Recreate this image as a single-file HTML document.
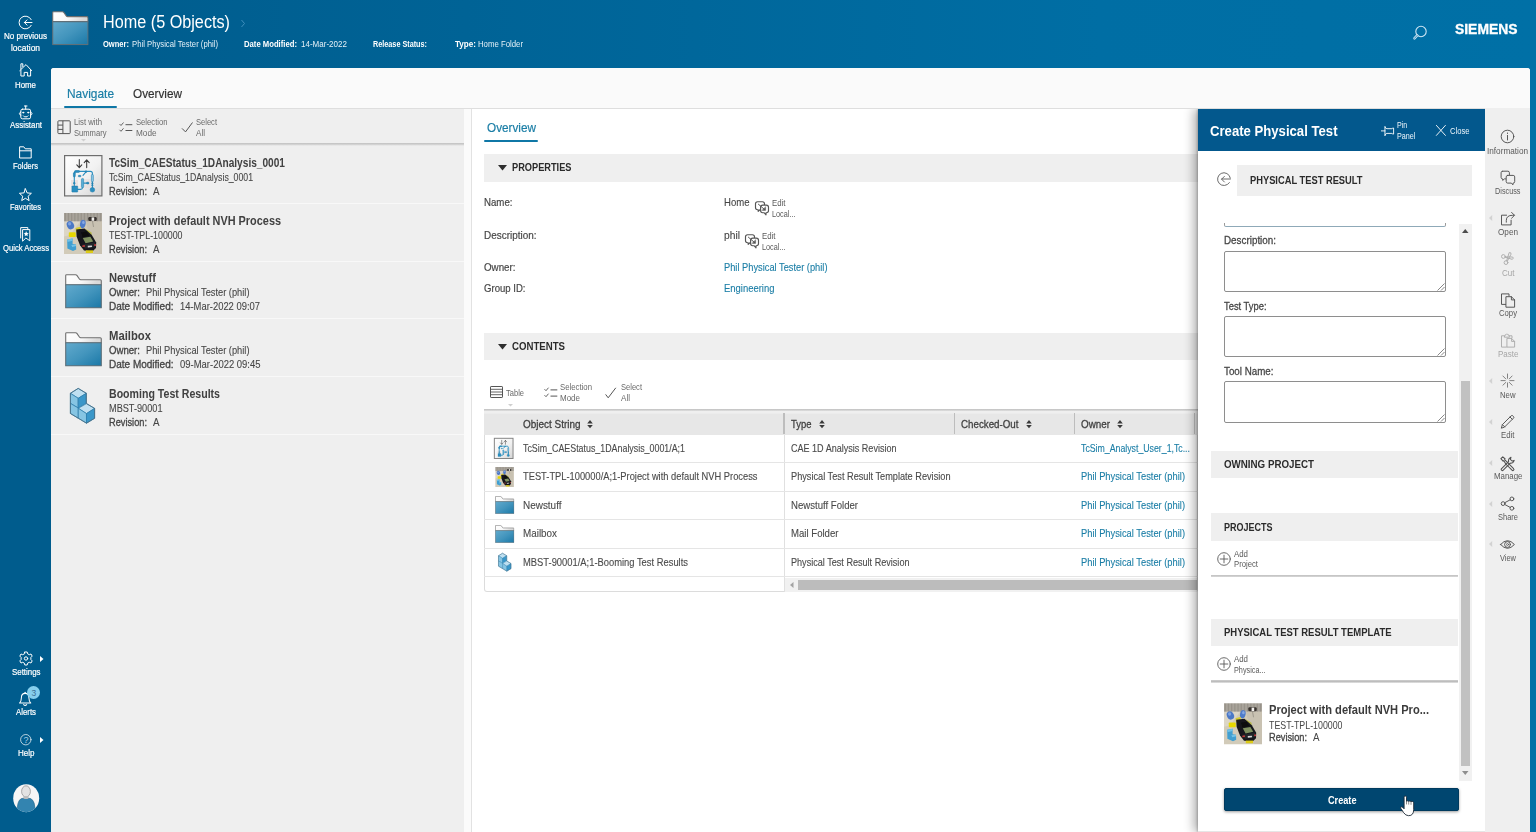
<!DOCTYPE html>
<html lang="en"><head><meta charset="utf-8"><title>Home - Active Workspace</title>
<style>
html,body{margin:0;padding:0;}
body{width:1536px;height:832px;overflow:hidden;background:#005c8d;font-family:"Liberation Sans",sans-serif;}
#app{position:relative;width:1536px;height:832px;overflow:hidden;background:linear-gradient(to right,#005c8d 0px,#005c8d 60px,#006ea4 1100px,#0070a6 1536px);}
.b{position:absolute;box-sizing:border-box;display:block;}
.t{position:absolute;white-space:nowrap;line-height:1;display:block;transform-origin:0 50%;}
svg{overflow:visible;}
.ico{fill:none;stroke:#4d4d4d;stroke-width:1;stroke-linecap:round;stroke-linejoin:round;}
.pb{display:inline-block;width:0;height:0;}

</style></head>
<body>
<svg width="0" height="0" style="position:absolute">
<defs>
<linearGradient id="gFold" x1="0" y1="0" x2="1" y2="1"><stop offset="0" stop-color="#62aacd"/><stop offset="0.5" stop-color="#4395bd"/><stop offset="1" stop-color="#1a78a7"/></linearGradient>
<linearGradient id="gTab" x1="0" y1="0" x2="1" y2="0.35"><stop offset="0" stop-color="#ffffff"/><stop offset="0.6" stop-color="#f8f8f8"/><stop offset="1" stop-color="#d9d9d9"/></linearGradient>
<linearGradient id="gCae" x1="0" y1="0" x2="1" y2="1"><stop offset="0" stop-color="#ffffff"/><stop offset="0.55" stop-color="#f1f1f1"/><stop offset="1" stop-color="#d4d4d4"/></linearGradient>
<symbol id="folder" viewBox="0 0 37 34.6">
<path d="M0.7 11 V1.6 Q0.7 0.7 1.6 0.7 H10.6 Q11.4 0.7 11.9 1.4 L14.4 5 Q14.9 5.7 15.8 5.7 H35.2 Q36.3 5.7 36.3 6.8 V11 Z" fill="url(#gTab)" stroke="#6f6f6f" stroke-width="1.1" stroke-linejoin="round"/>
<rect x="0.7" y="10.7" width="35.6" height="23.2" fill="url(#gFold)" stroke="#5f6f78" stroke-width="1.1" stroke-linejoin="round"/>
</symbol>
</defs>
</svg>

<div id="app">
<div class="b" style="left:0px;top:0px;width:51px;height:832px;background:#005c8d;"></div>
<div class="b" style="left:51px;top:67.5px;width:1479px;height:765px;background:#fff;border-radius:3px 3px 0 0;"></div>
<div class="b" style="left:51px;top:67.5px;width:1479px;height:40.5px;background:#fafafa;border-radius:3px 3px 0 0;"></div>
<div class="b" style="left:51px;top:108px;width:1479px;height:1px;background:#dedede;"></div>
<div class="b" style="left:51px;top:109px;width:413px;height:723px;background:#efefef;"></div>
<div class="b" style="left:464px;top:109px;width:7px;height:723px;background:#fbfbfb;"></div>
<div class="b" style="left:470.5px;top:109px;width:1px;height:723px;background:#e2e2e2;"></div>
<svg class="b" style="left:52.1px;top:10.5px;" width="36.7" height="34.3" viewBox="0 0 36.7 34.3"><use href="#folder" width="36.7" height="34.3"/></svg>
<span class="t" style="left:103.00px;top:13.01px;font-size:18px;color:#fff;transform:scaleX(0.9004);">Home (5 Objects)</span>
<svg class="b" style="left:240px;top:19px;" width="6" height="9" viewBox="0 0 6 9"><path d="M1.5 1 L4.5 4.5 L1.5 8" fill="none" stroke="#3f8fbd" stroke-width="1"/></svg>
<span class="t" style="left:103.00px;top:40.31px;font-size:9px;color:#fff;font-weight:700;transform:scaleX(0.8383);">Owner:</span>
<span class="t" style="left:132.00px;top:40.31px;font-size:9px;color:#e4f0f7;transform:scaleX(0.8568);">Phil Physical Tester (phil)</span>
<span class="t" style="left:244.00px;top:40.31px;font-size:9px;color:#fff;font-weight:700;transform:scaleX(0.8548);">Date Modified:</span>
<span class="t" style="left:301.00px;top:40.31px;font-size:9px;color:#e4f0f7;transform:scaleX(0.8927);">14-Mar-2022</span>
<span class="t" style="left:373.00px;top:40.31px;font-size:9px;color:#fff;font-weight:700;transform:scaleX(0.8056);">Release Status:</span>
<span class="t" style="left:455.00px;top:40.31px;font-size:9px;color:#fff;font-weight:700;transform:scaleX(0.8996);">Type:</span>
<span class="t" style="left:478.00px;top:40.31px;font-size:9px;color:#e4f0f7;transform:scaleX(0.8649);">Home Folder</span>
<svg class="b" style="left:1410px;top:22px;" width="20" height="20" viewBox="0 0 20 20"><circle cx="11" cy="9.5" r="5.2" fill="none" stroke="#cfe6f4" stroke-width="1.1"/><path d="M7.2 13.4 L4.4 16.4" stroke="#cfe6f4" stroke-width="2.4" stroke-linecap="round"/><path d="M7.2 13.4 L4.4 16.4" stroke="#0a70a6" stroke-width="0.8" stroke-linecap="round"/></svg>
<span class="t" style="left:1454.50px;top:22.01px;font-size:14px;color:#fff;font-weight:700;-webkit-text-stroke:0.3px #fff;transform:scaleX(0.9918);">SIEMENS</span>
<span class="t" style="left:4.00px;top:32.42px;font-size:9px;color:#fff;-webkit-text-stroke:0.2px #fff;transform:scaleX(0.8953);">No previous</span>
<span class="t" style="left:11.00px;top:43.61px;font-size:9px;color:#fff;-webkit-text-stroke:0.2px #fff;transform:scaleX(0.9345);">location</span>
<span class="t" style="left:15.30px;top:80.70px;font-size:9px;color:#fff;-webkit-text-stroke:0.2px #fff;transform:scaleX(0.8744);">Home</span>
<span class="t" style="left:10.00px;top:121.20px;font-size:9px;color:#fff;-webkit-text-stroke:0.2px #fff;transform:scaleX(0.8763);">Assistant</span>
<span class="t" style="left:13.00px;top:162.01px;font-size:9px;color:#fff;-webkit-text-stroke:0.2px #fff;transform:scaleX(0.8329);">Folders</span>
<span class="t" style="left:10.00px;top:203.01px;font-size:9px;color:#fff;-webkit-text-stroke:0.2px #fff;transform:scaleX(0.8375);">Favorites</span>
<span class="t" style="left:3.00px;top:244.01px;font-size:9px;color:#fff;-webkit-text-stroke:0.2px #fff;transform:scaleX(0.8514);">Quick Access</span>
<span class="t" style="left:11.75px;top:667.81px;font-size:9px;color:#fff;-webkit-text-stroke:0.2px #fff;transform:scaleX(0.8761);">Settings</span>
<span class="t" style="left:15.70px;top:708.31px;font-size:9px;color:#fff;-webkit-text-stroke:0.2px #fff;transform:scaleX(0.8690);">Alerts</span>
<span class="t" style="left:18.05px;top:749.01px;font-size:9px;color:#fff;-webkit-text-stroke:0.2px #fff;transform:scaleX(0.8911);">Help</span>
<svg class="b" style="left:18px;top:15.3px;" width="15" height="15" viewBox="0 0 15 15"><g fill="none" stroke="#fff" stroke-width="1" stroke-linecap="round" stroke-linejoin="round"><path d="M13.2 4.6 A6.4 6.4 0 1 0 13.2 10.4"/><path d="M14 7.5 H6.4 M9 4.9 L6.4 7.5 L9 10.1"/></g></svg>
<svg class="b" style="left:19px;top:63px;" width="14" height="14" viewBox="0 0 14 14"><g fill="none" stroke="#fff" stroke-width="1" stroke-linecap="round" stroke-linejoin="round"><path d="M0.8 7.6 L7 1.6 L12.6 7.6"/><path d="M1.9 6.8 V13 H5.2 V9.4 H8.6 V13 H11.6 V6.8"/><path d="M1.9 5.6 V0.8 H3.8 V3.6"/></g></svg>
<svg class="b" style="left:19px;top:104.5px;" width="14" height="15" viewBox="0 0 14 15"><g fill="none" stroke="#fff" stroke-width="1" stroke-linecap="round" stroke-linejoin="round"><rect x="1.8" y="4.2" width="9.8" height="9.6" rx="1.6"/><path d="M6.7 4.2 V1 M5.4 1 H8"/><path d="M1.8 7 Q0.4 7.6 0.4 8.6 Q0.4 9.8 1.8 10.2 M11.6 7 Q13 7.6 13 8.6 Q13 9.8 11.6 10.2"/><circle cx="4.2" cy="7.6" r="0.55" fill="#fff"/><circle cx="9.2" cy="7.6" r="0.55" fill="#fff"/><path d="M4.4 10.8 L5.4 11.8 H8 L9 10.8"/></g></svg>
<svg class="b" style="left:19px;top:145.8px;" width="13" height="13" viewBox="0 0 13 13"><g fill="none" stroke="#fff" stroke-width="1" stroke-linecap="round" stroke-linejoin="round"><path d="M0.6 11.6 V0.8 H4.8 L6.2 2.8 H12.2 V11.6 Z"/><path d="M0.6 4.8 H12.2"/></g></svg>
<svg class="b" style="left:19.3px;top:187.5px;" width="13" height="14" viewBox="0 0 13 14"><g fill="none" stroke="#fff" stroke-width="1" stroke-linecap="round" stroke-linejoin="round"><path d="M6.4 0.8 L8.1 4.9 L12.4 5.3 L9.1 8.2 L10.1 12.6 L6.4 10.3 L2.7 12.6 L3.7 8.2 L0.4 5.3 L4.7 4.9 Z"/></g></svg>
<svg class="b" style="left:20.3px;top:226.8px;" width="11" height="15" viewBox="0 0 11 15"><g fill="none" stroke="#fff" stroke-width="1" stroke-linecap="round" stroke-linejoin="round"><path d="M2.6 13.8 V2.6 H9.8 V13.8 L6.2 11.2 Z"/><path d="M0.7 11 V0.6 H7.8 V2.4"/><path d="M6.2 4.6 L6.9 6.1 L8.5 6.3 L7.3 7.4 L7.6 9 L6.2 8.2 L4.8 9 L5.1 7.4 L3.9 6.3 L5.5 6.1 Z" fill="#fff" stroke-width="0.2"/></g></svg>
<svg class="b" style="left:18.7px;top:651px;" width="14" height="15" viewBox="0 0 14 15"><g fill="none" stroke="#fff" stroke-width="1" stroke-linecap="round" stroke-linejoin="round"><circle cx="7" cy="7.5" r="1.7"/><path d="M5.8 1 H8.2 L8.6 2.8 L10.3 3.7 L12 3 L13.2 5.1 L11.9 6.4 V8.6 L13.2 9.9 L12 12 L10.3 11.3 L8.6 12.2 L8.2 14 H5.8 L5.4 12.2 L3.7 11.3 L2 12 L0.8 9.9 L2.1 8.6 V6.4 L0.8 5.1 L2 3 L3.7 3.7 L5.4 2.8 Z"/></g></svg>
<svg class="b" style="left:40px;top:655.5px;" width="4" height="6" viewBox="0 0 4 6"><path d="M0 0 L3.5 3 L0 6 Z" fill="#fff"/></svg>
<svg class="b" style="left:17.7px;top:690.6px;" width="14.3" height="16" viewBox="0 0 14 15"><g fill="none" stroke="#fff" stroke-width="1" stroke-linecap="round" stroke-linejoin="round"><path d="M1.5 11.5 Q3.3 9.5 3.3 6.5 Q3.3 2 7 2 Q10.7 2 10.7 6.5 Q10.7 9.5 12.5 11.5 Z"/><path d="M5.5 13 Q7 14.5 8.5 13"/><path d="M7 2 V1"/></g></svg>
<div class="b" style="left:27px;top:686.2px;width:13px;height:13px;background:#86cfee;border-radius:50%;"></div>
<span class="t" style="left:31.50px;top:688.81px;font-size:8.5px;color:#3b7094;">3</span>
<svg class="b" style="left:20px;top:734px;" width="12" height="12" viewBox="0 0 12 12"><g fill="none" stroke="#fff" stroke-width="1" stroke-linecap="round" stroke-linejoin="round" stroke-width="0.8" opacity="0.7"><circle cx="5.8" cy="5.7" r="5.2"/></g></svg>
<span class="t" style="left:23.60px;top:736.01px;font-size:9px;color:#a9cfe6;">?</span>
<svg class="b" style="left:40px;top:736.5px;" width="4" height="6" viewBox="0 0 4 6"><path d="M0 0 L3.5 3 L0 6 Z" fill="#fff"/></svg>
<svg class="b" style="left:12.5px;top:784.3px;" width="26.4" height="28.4" viewBox="0 0 26.4 28.4"><defs><clipPath id="avc"><ellipse cx="13.2" cy="14.2" rx="13" ry="14"/></clipPath></defs><ellipse cx="13.2" cy="14.2" rx="13" ry="14" fill="#f6f6f6"/><g clip-path="url(#avc)"><path d="M4.2 30 Q3.6 16.5 8.4 14.6 Q13 13.2 17.6 14.6 Q22.6 16.5 22 30 Z" fill="#3384b0" stroke="#21648a" stroke-width="0.6"/><ellipse cx="13" cy="7.4" rx="4.4" ry="5.6" fill="#e3e3e3" stroke="#8d8d8d" stroke-width="0.7"/><path d="M10.2 12 Q13 14.6 15.8 12 L15.4 14.4 Q13 15.6 10.6 14.4 Z" fill="#bdbdbd"/></g></svg>
<span class="t" style="left:67.00px;top:87.00px;font-size:13px;color:#1b7ea6;-webkit-text-stroke:0.2px #1b7ea6;transform:scaleX(0.9160);">Navigate</span>
<span class="t" style="left:133.00px;top:87.00px;font-size:13px;color:#333;-webkit-text-stroke:0.2px #333;transform:scaleX(0.9043);">Overview</span>
<div class="b" style="left:64px;top:105.8px;width:53px;height:2.2px;background:#0f77a6;border-radius:1px;"></div>
<svg class="b" style="left:57px;top:120px;" width="14" height="15" viewBox="0 0 14 15"><g fill="none" stroke="#555" stroke-width="1"><rect x="0.9" y="0.8" width="12.3" height="12.8" rx="0.8"/><path d="M5.9 0.8 V13.6 M0.9 5.1 H5.9 M0.9 9.4 H5.9"/></g></svg>
<span class="t" style="left:74.00px;top:117.70px;font-size:9px;color:#6a6a6a;transform:scaleX(0.8611);">List with</span>
<span class="t" style="left:74.00px;top:128.70px;font-size:9px;color:#6a6a6a;transform:scaleX(0.8438);">Summary</span>
<svg class="b" style="left:80.5px;top:138.5px;" width="5" height="3" viewBox="0 0 5 3"><path d="M0 0 L2.5 2.5 L5 0 Z" fill="#cfcfcf"/></svg>
<svg class="b" style="left:119px;top:121px;" width="14" height="13" viewBox="0 0 14 13"><g fill="none" stroke="#555" stroke-width="1"><path d="M0.5 3 L2 4.5 L4.5 1.5 M0.5 8.8 L2 10.3 L4.5 7.3" stroke-width="0.9"/><path d="M6.5 3.7 H13.3 M6.5 9.5 H13.3" stroke-width="1"/></g></svg>
<span class="t" style="left:135.50px;top:117.70px;font-size:9px;color:#6a6a6a;transform:scaleX(0.8506);">Selection</span>
<span class="t" style="left:135.50px;top:128.70px;font-size:9px;color:#6a6a6a;transform:scaleX(0.9105);">Mode</span>
<svg class="b" style="left:180.5px;top:119px;" width="12" height="14" viewBox="0 0 12 14"><path d="M1 9.4 L4.5 12.9 L11.5 3.5" fill="none" stroke="#555" stroke-width="1" stroke-width="0.9"/></svg>
<span class="t" style="left:196.00px;top:117.70px;font-size:9px;color:#6a6a6a;transform:scaleX(0.8395);">Select</span>
<span class="t" style="left:196.00px;top:128.70px;font-size:9px;color:#6a6a6a;transform:scaleX(0.8986);">All</span>
<div class="b" style="left:51px;top:143px;width:413px;height:3px;background:linear-gradient(to bottom,#c4c4c4 0,#c9c9c9 35%,#e0e0e0 70%,#efefef 100%);"></div>
<div class="b" style="left:51px;top:202.5px;width:413px;height:1.5px;background:#f8f8f8;"></div>
<div class="b" style="left:51px;top:260.5px;width:413px;height:1.5px;background:#f8f8f8;"></div>
<div class="b" style="left:51px;top:317.9px;width:413px;height:1.5px;background:#f8f8f8;"></div>
<div class="b" style="left:51px;top:375.7px;width:413px;height:1.5px;background:#f8f8f8;"></div>
<div class="b" style="left:51px;top:433.9px;width:413px;height:1.5px;background:#f8f8f8;"></div>
<svg class="b" style="left:64.1px;top:154.7px;" width="38.5" height="41.5" viewBox="0 0 38.5 41.5"><rect x="0.6" y="0.6" width="37.3" height="40.3" fill="url(#gCae)" stroke="#6e6e6e" stroke-width="1.2"/>
<g fill="none" stroke="#3a3a3a" stroke-width="1.05" stroke-linecap="round" stroke-linejoin="round"><path d="M15.3 4.6 V12.4 M12.8 9.8 L15.3 12.6 L17.8 9.8"/><path d="M22.7 12.6 V5 M20.2 7.6 L22.7 4.8 L25.2 7.6"/></g>
<rect x="7" y="25" width="7" height="7" fill="#e6dcdc" opacity="0.7"/><rect x="21" y="24" width="6" height="9" fill="#e6dcdc" opacity="0.6"/>
<g fill="none" stroke="#2a8fc1" stroke-width="1.1" stroke-linecap="round" stroke-linejoin="round">
<path d="M10.3 31 V18.6 Q10.3 16.4 12.5 16.4 H26.4 Q28.4 16.4 28.4 18.4 V33"/>
<path d="M22 16.8 L19 20.4 M18.5 32.6 Q18.5 34.4 16.6 34.4 H13.6 M19.6 28.1 H24.4"/>
</g>
<g fill="#2a8fc1" stroke="#1d78a6" stroke-width="0.5">
<rect x="9.4" y="17.4" width="1.9" height="4.6" rx="0.9"/><rect x="10.6" y="15.5" width="5" height="1.9" rx="0.9"/>
<rect x="14.3" y="20.3" width="2.6" height="1.5" rx="0.5"/>
<rect x="17.4" y="23.4" width="2.3" height="9.4" rx="1.1" fill="#58aed6"/>
<rect x="27.4" y="19.4" width="2" height="7.4" rx="1" fill="#8cc8e6"/>
<rect x="22.6" y="27.2" width="2.2" height="1.8" rx="0.5"/>
<circle cx="22" cy="16.6" r="0.9"/><circle cx="10.3" cy="28.2" r="0.9"/><circle cx="28.4" cy="28.3" r="0.8"/><circle cx="28.4" cy="30.2" r="0.8"/>
<rect x="7.9" y="31.1" width="5.8" height="6" rx="0.4"/>
<circle cx="28.4" cy="34.8" r="2.3"/>
</g></svg>
<span class="t" style="left:109.00px;top:157.01px;font-size:12.5px;color:#414141;font-weight:700;transform:scaleX(0.8101);">TcSim_CAEStatus_1DAnalysis_0001</span>
<span class="t" style="left:109.00px;top:172.00px;font-size:11.5px;color:#464646;-webkit-text-stroke:0.1px #464646;transform:scaleX(0.7585);">TcSim_CAEStatus_1DAnalysis_0001</span>
<span class="t" style="left:109.00px;top:186.00px;font-size:11.5px;color:#464646;-webkit-text-stroke:0.35px #464646;transform:scaleX(0.8032);">Revision:</span>
<span class="t" style="left:153.00px;top:186.00px;font-size:11.5px;color:#464646;-webkit-text-stroke:0.1px #464646;transform:scaleX(0.8473);">A</span>
<svg class="b" style="left:64px;top:212.8px;" width="38" height="41" viewBox="0 0 38 41"><defs><clipPath id="cc1"><rect x="0" y="0" width="38" height="41"/></clipPath><filter id="cc1f" x="-5%" y="-5%" width="110%" height="110%"><feGaussianBlur stdDeviation="0.7"/></filter></defs>
<g clip-path="url(#cc1)"><g filter="url(#cc1f)">
<rect x="-2" y="-2" width="42" height="45" fill="#d2cbb9"/>
<rect x="-2" y="-2" width="42" height="10.5" fill="#a9a49b"/><rect x="0.6" y="0" width="1.3" height="8.5" fill="#98938a"/><rect x="3.8" y="0" width="1.3" height="8.5" fill="#98938a"/><rect x="7.0" y="0" width="1.3" height="8.5" fill="#98938a"/><rect x="10.2" y="0" width="1.3" height="8.5" fill="#98938a"/><rect x="13.4" y="0" width="1.3" height="8.5" fill="#98938a"/><rect x="16.6" y="0" width="1.3" height="8.5" fill="#98938a"/><rect x="19.8" y="0" width="1.3" height="8.5" fill="#98938a"/><rect x="23.0" y="0" width="1.3" height="8.5" fill="#98938a"/><rect x="26.2" y="0" width="1.3" height="8.5" fill="#98938a"/><rect x="29.4" y="0" width="1.3" height="8.5" fill="#98938a"/><rect x="32.6" y="0" width="1.3" height="8.5" fill="#98938a"/><rect x="35.8" y="0" width="1.3" height="8.5" fill="#98938a"/>
<path d="M22 8.5 L40 8.5 L40 43 L30 43 Z" fill="#c9c2b2"/>
<path d="M-2 8.5 L16 8.5 L6 22 L-2 24 Z" fill="#dcd6c7"/>
<rect x="24.3" y="4" width="8.4" height="4" rx="1.2" fill="#37332f"/><rect x="27.6" y="4.4" width="2.6" height="3.4" fill="#f4f2ee"/>
<path d="M28.5 8 L29.5 14" stroke="#8c877d" stroke-width="0.7"/>
<ellipse cx="6.4" cy="12.2" rx="3.5" ry="4.3" fill="#4c78c6" transform="rotate(-25 6.4 12.2)"/>
<ellipse cx="5.6" cy="10.8" rx="1.6" ry="1.8" fill="#7ea2e0"/>
<ellipse cx="18.8" cy="11" rx="2.8" ry="4.2" fill="#4f7bca" transform="rotate(12 18.8 11)"/>
<ellipse cx="19.4" cy="9.4" rx="1.3" ry="1.6" fill="#86a8e4"/>
<path d="M11.5 15 L17 13.5 L16 18 L12 19 Z" fill="#d9cd2e"/>
<rect x="4.8" y="19.2" width="7" height="4.8" rx="0.8" fill="#e6d706"/>
<path d="M22 16 L27.5 19.5 L28 24 L24 22 Z" fill="#b7b84a"/>
<path d="M12.2 16.5 L20.5 15.6 L27.8 22 L32.2 29.4 L32 35 L28.6 38.2 L20 37.6 L16 32.2 L12.6 23.5 Z" fill="#16181b"/>
<path d="M17 19.5 L22.5 18.5 L25.5 22.8 L18.5 24.2 Z" fill="#0c0d10"/>
<path d="M18.8 25 L26.4 23.8 L29.2 28.6 L21.6 30.2 Z" fill="#7f9160"/>
<path d="M18.2 31.5 L31 29.6 L31.4 33.8 L20.8 35.4 Z" fill="#23262b"/>
<rect x="18.3" y="32.2" width="2.6" height="1.7" fill="#c23b3b" transform="rotate(-8 19.6 33)"/>
<rect x="30.2" y="31.2" width="1.8" height="1.7" fill="#c23b3b"/>
<rect x="23.8" y="32.6" width="4.2" height="1.6" fill="#d8d8d8" transform="rotate(-6 26 33.4)"/>
<rect x="21.8" y="37.3" width="7.2" height="2.7" fill="#dccb12"/>
<path d="M3.2 26.4 L8.6 25.6 L8.6 31 L12 31.4 L12.2 36.6 L9 38 L3.4 35.4 Z" fill="#3f9fd2"/>
<path d="M3.2 26.4 L8.6 25.6 L8.6 27.8 L3.6 29 Z" fill="#6fc0e6"/>
<path d="M7.4 32 L12 31.4 L12.1 33 L8.2 34 Z" fill="#74c4e8"/>
</g></g></svg>
<span class="t" style="left:109.00px;top:215.01px;font-size:12.5px;color:#414141;font-weight:700;transform:scaleX(0.8719);">Project with default NVH Process</span>
<span class="t" style="left:109.00px;top:230.00px;font-size:11.5px;color:#464646;-webkit-text-stroke:0.1px #464646;transform:scaleX(0.7665);">TEST-TPL-100000</span>
<span class="t" style="left:109.00px;top:244.00px;font-size:11.5px;color:#464646;-webkit-text-stroke:0.35px #464646;transform:scaleX(0.8032);">Revision:</span>
<span class="t" style="left:153.00px;top:244.00px;font-size:11.5px;color:#464646;-webkit-text-stroke:0.1px #464646;transform:scaleX(0.8473);">A</span>
<svg class="b" style="left:64.9px;top:273.8px;" width="37" height="34.6" viewBox="0 0 37 34.6"><use href="#folder" width="37" height="34.6"/></svg>
<span class="t" style="left:109.00px;top:272.01px;font-size:12.5px;color:#414141;font-weight:700;transform:scaleX(0.8905);">Newstuff</span>
<span class="t" style="left:109.00px;top:287.00px;font-size:11.5px;color:#464646;-webkit-text-stroke:0.35px #464646;transform:scaleX(0.8361);">Owner:</span>
<span class="t" style="left:146.00px;top:287.00px;font-size:11.5px;color:#464646;-webkit-text-stroke:0.1px #464646;transform:scaleX(0.8069);">Phil Physical Tester (phil)</span>
<span class="t" style="left:109.00px;top:301.00px;font-size:11.5px;color:#464646;-webkit-text-stroke:0.35px #464646;transform:scaleX(0.8698);">Date Modified:</span>
<span class="t" style="left:180.00px;top:301.00px;font-size:11.5px;color:#464646;-webkit-text-stroke:0.1px #464646;transform:scaleX(0.8179);">14-Mar-2022 09:07</span>
<svg class="b" style="left:64.9px;top:331.8px;" width="37" height="34.6" viewBox="0 0 37 34.6"><use href="#folder" width="37" height="34.6"/></svg>
<span class="t" style="left:109.00px;top:330.01px;font-size:12.5px;color:#414141;font-weight:700;transform:scaleX(0.9023);">Mailbox</span>
<span class="t" style="left:109.00px;top:345.00px;font-size:11.5px;color:#464646;-webkit-text-stroke:0.35px #464646;transform:scaleX(0.8361);">Owner:</span>
<span class="t" style="left:146.00px;top:345.00px;font-size:11.5px;color:#464646;-webkit-text-stroke:0.1px #464646;transform:scaleX(0.8069);">Phil Physical Tester (phil)</span>
<span class="t" style="left:109.00px;top:359.00px;font-size:11.5px;color:#464646;-webkit-text-stroke:0.35px #464646;transform:scaleX(0.8698);">Date Modified:</span>
<span class="t" style="left:179.50px;top:359.00px;font-size:11.5px;color:#464646;-webkit-text-stroke:0.1px #464646;transform:scaleX(0.8230);">09-Mar-2022 09:45</span>
<svg class="b" style="left:70.2px;top:388px;" width="25" height="35.6" viewBox="0 0 25 35.6"><g stroke="#2a7cab" stroke-width="0.75" stroke-linejoin="round">
<path d="M0.4 5.3 L8.2 0.4 L16.3 5.3 L8.2 10.3 Z" fill="#bfe0f1"/>
<path d="M0.4 5.3 L8.2 10.3 V20 L0.4 15.4 Z" fill="#86c5e3"/>
<path d="M16.3 5.3 L8.2 10.3 V20 L16.3 15.2 Z" fill="#3a97c9"/>
<path d="M0.4 15.4 L8.2 20 V30.2 L0.4 25.5 Z" fill="#86c5e3"/>
<path d="M8.3 20.3 L16.5 15.6 L24.6 20.4 L16.5 25.6 Z" fill="#bfe0f1"/>
<path d="M8.3 20.3 L16.5 25.6 V35.2 L8.3 30.2 Z" fill="#86c5e3"/>
<path d="M24.6 20.4 L16.5 25.6 V35.2 L24.6 30.3 Z" fill="#3a97c9"/>
</g>
<path d="M0.4 5.3 L8.2 0.4 L16.3 5.3 V15.4 L16.5 15.6 L24.6 20.4 V30.3 L16.5 35.2 L0.4 25.5 Z" fill="none" stroke="#4a6c80" stroke-width="0.8" stroke-linejoin="round"/></svg>
<span class="t" style="left:109.00px;top:388.01px;font-size:12.5px;color:#414141;font-weight:700;transform:scaleX(0.8471);">Booming Test Results</span>
<span class="t" style="left:109.00px;top:403.00px;font-size:11.5px;color:#464646;-webkit-text-stroke:0.1px #464646;transform:scaleX(0.7970);">MBST-90001</span>
<span class="t" style="left:109.00px;top:417.00px;font-size:11.5px;color:#464646;-webkit-text-stroke:0.35px #464646;transform:scaleX(0.8032);">Revision:</span>
<span class="t" style="left:153.00px;top:417.00px;font-size:11.5px;color:#464646;-webkit-text-stroke:0.1px #464646;transform:scaleX(0.8473);">A</span>
<span class="t" style="left:486.50px;top:120.71px;font-size:13px;color:#1b7ea6;-webkit-text-stroke:0.2px #1b7ea6;transform:scaleX(0.9043);">Overview</span>
<div class="b" style="left:484px;top:139.5px;width:54px;height:2.2px;background:#0f77a6;border-radius:1px;"></div>
<div class="b" style="left:483.5px;top:153.5px;width:1046.5px;height:28px;background:#efefef;"></div>
<svg class="b" style="left:498px;top:165px;" width="9" height="5.5" viewBox="0 0 9 5.5"><path d="M0 0 H9 L4.5 5.5 Z" fill="#2e2e2e"/></svg>
<span class="t" style="left:512.00px;top:161.80px;font-size:11.5px;color:#2b2b2b;font-weight:700;transform:scaleX(0.8025);">PROPERTIES</span>
<span class="t" style="left:483.50px;top:197.00px;font-size:11.5px;color:#464646;-webkit-text-stroke:0.2px #464646;transform:scaleX(0.8413);">Name:</span>
<span class="t" style="left:723.50px;top:197.00px;font-size:11.5px;color:#464646;-webkit-text-stroke:0.12px #464646;transform:scaleX(0.8310);">Home</span>
<svg class="b" style="left:755.1px;top:201.1px;" width="14" height="14.5" viewBox="0 0 14 14.5"><g fill="#fff" stroke="#555" stroke-width="1.15" stroke-linejoin="round" stroke-linecap="round"><path d="M2.6 0.7 H7.4 Q9.5 0.7 9.5 2.8 V6.6 Q9.5 8.7 7.4 8.7 H5 L3.2 10.3 V8.7 H2.6 Q0.5 8.7 0.5 6.6 V2.8 Q0.5 0.7 2.6 0.7 Z"/><path d="M7.7 4.1 H11.4 Q13.5 4.1 13.5 6.2 V9.6 Q13.5 11.7 11.4 11.7 H11 V13.8 L9 11.7 H7.7 Q5.6 11.7 5.6 9.6 V6.2 Q5.6 4.1 7.7 4.1 Z"/><path d="M3.4 3.2 L9.6 8.6" fill="none" stroke-width="1"/><path d="M10.6 5.9 V9.4 H7.2 Z" fill="#555" stroke-width="0.4"/></g></svg>
<span class="t" style="left:771.50px;top:199.01px;font-size:9px;color:#5a5a5a;transform:scaleX(0.8701);">Edit</span>
<span class="t" style="left:771.50px;top:210.01px;font-size:9px;color:#5a5a5a;transform:scaleX(0.8095);">Local...</span>
<span class="t" style="left:483.50px;top:230.00px;font-size:11.5px;color:#464646;-webkit-text-stroke:0.2px #464646;transform:scaleX(0.8646);">Description:</span>
<span class="t" style="left:723.50px;top:230.00px;font-size:11.5px;color:#464646;-webkit-text-stroke:0.12px #464646;transform:scaleX(0.8935);">phil</span>
<svg class="b" style="left:745.1px;top:234.1px;" width="14" height="14.5" viewBox="0 0 14 14.5"><g fill="#fff" stroke="#555" stroke-width="1.15" stroke-linejoin="round" stroke-linecap="round"><path d="M2.6 0.7 H7.4 Q9.5 0.7 9.5 2.8 V6.6 Q9.5 8.7 7.4 8.7 H5 L3.2 10.3 V8.7 H2.6 Q0.5 8.7 0.5 6.6 V2.8 Q0.5 0.7 2.6 0.7 Z"/><path d="M7.7 4.1 H11.4 Q13.5 4.1 13.5 6.2 V9.6 Q13.5 11.7 11.4 11.7 H11 V13.8 L9 11.7 H7.7 Q5.6 11.7 5.6 9.6 V6.2 Q5.6 4.1 7.7 4.1 Z"/><path d="M3.4 3.2 L9.6 8.6" fill="none" stroke-width="1"/><path d="M10.6 5.9 V9.4 H7.2 Z" fill="#555" stroke-width="0.4"/></g></svg>
<span class="t" style="left:761.50px;top:232.01px;font-size:9px;color:#5a5a5a;transform:scaleX(0.8701);">Edit</span>
<span class="t" style="left:761.50px;top:243.01px;font-size:9px;color:#5a5a5a;transform:scaleX(0.8095);">Local...</span>
<span class="t" style="left:483.50px;top:262.20px;font-size:11.5px;color:#464646;-webkit-text-stroke:0.2px #464646;transform:scaleX(0.8496);">Owner:</span>
<span class="t" style="left:723.50px;top:262.20px;font-size:11.5px;color:#1b7ea6;-webkit-text-stroke:0.12px #1b7ea6;transform:scaleX(0.8069);">Phil Physical Tester (phil)</span>
<span class="t" style="left:483.50px;top:283.41px;font-size:11.5px;color:#464646;-webkit-text-stroke:0.2px #464646;transform:scaleX(0.8323);">Group ID:</span>
<span class="t" style="left:723.50px;top:283.41px;font-size:11.5px;color:#1b7ea6;-webkit-text-stroke:0.12px #1b7ea6;transform:scaleX(0.8226);">Engineering</span>
<div class="b" style="left:483.5px;top:332.5px;width:1046.5px;height:27.5px;background:#efefef;"></div>
<svg class="b" style="left:498px;top:344px;" width="9" height="5.5" viewBox="0 0 9 5.5"><path d="M0 0 H9 L4.5 5.5 Z" fill="#2e2e2e"/></svg>
<span class="t" style="left:512.00px;top:341.00px;font-size:11.5px;color:#2b2b2b;font-weight:700;transform:scaleX(0.8379);">CONTENTS</span>
<svg class="b" style="left:490px;top:386px;" width="13" height="12" viewBox="0 0 13 12"><g fill="none" stroke="#555" stroke-width="1"><rect x="0.5" y="0.5" width="12" height="11" rx="0.6"/><path d="M0.5 3.3 H12.5 M0.5 6 H12.5 M0.5 8.7 H12.5" stroke-width="0.9"/></g></svg>
<span class="t" style="left:506.00px;top:389.01px;font-size:9px;color:#6a6a6a;transform:scaleX(0.8366);">Table</span>
<svg class="b" style="left:508px;top:404px;" width="5" height="3" viewBox="0 0 5 3"><path d="M0 0 L2.5 2.5 L5 0 Z" fill="#cfcfcf"/></svg>
<svg class="b" style="left:543.5px;top:386px;" width="14" height="12" viewBox="0 0 14 12"><g fill="none" stroke="#555" stroke-width="1"><path d="M0.5 3.2 L2 4.7 L4.5 1.7 M0.5 9.2 L2 10.7 L4.5 7.7" stroke-width="0.9"/><path d="M6.5 3.9 H13.3 M6.5 10.1 H13.3" stroke-width="1"/></g></svg>
<span class="t" style="left:560.00px;top:383.20px;font-size:9px;color:#6a6a6a;transform:scaleX(0.8641);">Selection</span>
<span class="t" style="left:560.00px;top:394.42px;font-size:9px;color:#6a6a6a;transform:scaleX(0.8883);">Mode</span>
<svg class="b" style="left:605px;top:386.5px;" width="11.5" height="12" viewBox="0 0 11.5 12"><path d="M0.6 7.4 L3.2 10.8 L10.8 0.8" fill="none" stroke="#555" stroke-width="1" stroke-width="0.9"/></svg>
<span class="t" style="left:620.50px;top:383.20px;font-size:9px;color:#6a6a6a;transform:scaleX(0.8395);">Select</span>
<span class="t" style="left:620.50px;top:394.42px;font-size:9px;color:#6a6a6a;transform:scaleX(0.8986);">All</span>
<div class="b" style="left:483.5px;top:408.8px;width:714px;height:2.7px;background:linear-gradient(to bottom,#c2c2c2 0,#cdcdcd 50%,#e2e2e2 100%);"></div>
<div class="b" style="left:483.5px;top:411px;width:714px;height:181px;border:1px solid #dcdcdc;border-top:none;border-radius:0 0 3px 3px;background:#fff;"></div>
<div class="b" style="left:484px;top:411px;width:713.5px;height:23.5px;background:linear-gradient(to bottom,#efefef 0,#efefef 2px,#e7e7e7 3.2px,#e7e7e7 100%);"></div>
<div class="b" style="left:783.25px;top:412.5px;width:1.5px;height:21.5px;background:#bdbdbd;"></div>
<div class="b" style="left:953.75px;top:412.5px;width:1.5px;height:21.5px;background:#bdbdbd;"></div>
<div class="b" style="left:1073.75px;top:412.5px;width:1.5px;height:21.5px;background:#bdbdbd;"></div>
<div class="b" style="left:1193.75px;top:412.5px;width:1.5px;height:21.5px;background:#bdbdbd;"></div>
<div class="b" style="left:783.5px;top:434.5px;width:1px;height:157px;background:#e0e0e0;"></div>
<div class="b" style="left:484px;top:462.0px;width:713.5px;height:1px;background:#e5e5e5;"></div>
<div class="b" style="left:484px;top:490.5px;width:713.5px;height:1px;background:#e5e5e5;"></div>
<div class="b" style="left:484px;top:519.0px;width:713.5px;height:1px;background:#e5e5e5;"></div>
<div class="b" style="left:484px;top:547.5px;width:713.5px;height:1px;background:#e5e5e5;"></div>
<div class="b" style="left:484px;top:576.0px;width:713.5px;height:1px;background:#e5e5e5;"></div>
<span class="t" style="left:522.50px;top:419.00px;font-size:11.5px;color:#3f3f3f;-webkit-text-stroke:0.3px #3f3f3f;transform:scaleX(0.8649);">Object String</span>
<svg class="b" style="left:587px;top:420.4px;" width="6" height="8.4" viewBox="0 0 6 8.4"><path d="M3 0 L5.8 3.4 H0.2 Z M0.2 4.9 H5.8 L3 8.3 Z" fill="#3a3a3a"/></svg>
<span class="t" style="left:790.50px;top:419.00px;font-size:11.5px;color:#3f3f3f;-webkit-text-stroke:0.3px #3f3f3f;transform:scaleX(0.8221);">Type</span>
<svg class="b" style="left:818.5px;top:420.4px;" width="6" height="8.4" viewBox="0 0 6 8.4"><path d="M3 0 L5.8 3.4 H0.2 Z M0.2 4.9 H5.8 L3 8.3 Z" fill="#3a3a3a"/></svg>
<span class="t" style="left:961.00px;top:419.00px;font-size:11.5px;color:#3f3f3f;-webkit-text-stroke:0.3px #3f3f3f;transform:scaleX(0.8485);">Checked-Out</span>
<svg class="b" style="left:1025.5px;top:420.4px;" width="6" height="8.4" viewBox="0 0 6 8.4"><path d="M3 0 L5.8 3.4 H0.2 Z M0.2 4.9 H5.8 L3 8.3 Z" fill="#3a3a3a"/></svg>
<span class="t" style="left:1081.00px;top:419.00px;font-size:11.5px;color:#3f3f3f;-webkit-text-stroke:0.3px #3f3f3f;transform:scaleX(0.8561);">Owner</span>
<svg class="b" style="left:1117px;top:420.4px;" width="6" height="8.4" viewBox="0 0 6 8.4"><path d="M3 0 L5.8 3.4 H0.2 Z M0.2 4.9 H5.8 L3 8.3 Z" fill="#3a3a3a"/></svg>
<span class="t" style="left:522.50px;top:442.70px;font-size:11.5px;color:#4a4a4a;-webkit-text-stroke:0.12px #4a4a4a;transform:scaleX(0.7703);">TcSim_CAEStatus_1DAnalysis_0001/A;1</span>
<span class="t" style="left:790.50px;top:442.70px;font-size:11.5px;color:#4a4a4a;-webkit-text-stroke:0.12px #4a4a4a;transform:scaleX(0.7859);">CAE 1D Analysis Revision</span>
<span class="t" style="left:1081.00px;top:442.70px;font-size:11.5px;color:#1b7ea6;-webkit-text-stroke:0.12px #1b7ea6;transform:scaleX(0.7613);">TcSim_Analyst_User_1,Tc...</span>
<span class="t" style="left:522.50px;top:471.20px;font-size:11.5px;color:#4a4a4a;-webkit-text-stroke:0.12px #4a4a4a;transform:scaleX(0.8099);">TEST-TPL-100000/A;1-Project with default NVH Process</span>
<span class="t" style="left:790.50px;top:471.20px;font-size:11.5px;color:#4a4a4a;-webkit-text-stroke:0.12px #4a4a4a;transform:scaleX(0.7989);">Physical Test Result Template Revision</span>
<span class="t" style="left:1081.00px;top:471.20px;font-size:11.5px;color:#1b7ea6;-webkit-text-stroke:0.12px #1b7ea6;transform:scaleX(0.8108);">Phil Physical Tester (phil)</span>
<span class="t" style="left:522.50px;top:499.70px;font-size:11.5px;color:#4a4a4a;-webkit-text-stroke:0.12px #4a4a4a;transform:scaleX(0.8646);">Newstuff</span>
<span class="t" style="left:790.50px;top:499.70px;font-size:11.5px;color:#4a4a4a;-webkit-text-stroke:0.12px #4a4a4a;transform:scaleX(0.8341);">Newstuff Folder</span>
<span class="t" style="left:1081.00px;top:499.70px;font-size:11.5px;color:#1b7ea6;-webkit-text-stroke:0.12px #1b7ea6;transform:scaleX(0.8108);">Phil Physical Tester (phil)</span>
<span class="t" style="left:522.50px;top:528.20px;font-size:11.5px;color:#4a4a4a;-webkit-text-stroke:0.12px #4a4a4a;transform:scaleX(0.8577);">Mailbox</span>
<span class="t" style="left:790.50px;top:528.20px;font-size:11.5px;color:#4a4a4a;-webkit-text-stroke:0.12px #4a4a4a;transform:scaleX(0.8349);">Mail Folder</span>
<span class="t" style="left:1081.00px;top:528.20px;font-size:11.5px;color:#1b7ea6;-webkit-text-stroke:0.12px #1b7ea6;transform:scaleX(0.8108);">Phil Physical Tester (phil)</span>
<span class="t" style="left:522.50px;top:556.70px;font-size:11.5px;color:#4a4a4a;-webkit-text-stroke:0.12px #4a4a4a;transform:scaleX(0.8151);">MBST-90001/A;1-Booming Test Results</span>
<span class="t" style="left:790.50px;top:556.70px;font-size:11.5px;color:#4a4a4a;-webkit-text-stroke:0.12px #4a4a4a;transform:scaleX(0.7900);">Physical Test Result Revision</span>
<span class="t" style="left:1081.00px;top:556.70px;font-size:11.5px;color:#1b7ea6;-webkit-text-stroke:0.12px #1b7ea6;transform:scaleX(0.8108);">Phil Physical Tester (phil)</span>
<svg class="b" style="left:494.3px;top:438.1px;" width="19.4" height="20.8" viewBox="0 0 38.5 41.5"><rect x="0.6" y="0.6" width="37.3" height="40.3" fill="url(#gCae)" stroke="#858585" stroke-width="2"/>
<g fill="none" stroke="#3a3a3a" stroke-width="1.05" stroke-linecap="round" stroke-linejoin="round"><path d="M15.3 4.6 V12.4 M12.8 9.8 L15.3 12.6 L17.8 9.8"/><path d="M22.7 12.6 V5 M20.2 7.6 L22.7 4.8 L25.2 7.6"/></g>
<rect x="7" y="25" width="7" height="7" fill="#e6dcdc" opacity="0.7"/><rect x="21" y="24" width="6" height="9" fill="#e6dcdc" opacity="0.6"/>
<g fill="none" stroke="#2a8fc1" stroke-width="1.7" stroke-linecap="round" stroke-linejoin="round">
<path d="M10.3 31 V18.6 Q10.3 16.4 12.5 16.4 H26.4 Q28.4 16.4 28.4 18.4 V33"/>
<path d="M22 16.8 L19 20.4 M18.5 32.6 Q18.5 34.4 16.6 34.4 H13.6 M19.6 28.1 H24.4"/>
</g>
<g fill="#2a8fc1" stroke="#1d78a6" stroke-width="0.5">
<rect x="9.4" y="17.4" width="1.9" height="4.6" rx="0.9"/><rect x="10.6" y="15.5" width="5" height="1.9" rx="0.9"/>
<rect x="14.3" y="20.3" width="2.6" height="1.5" rx="0.5"/>
<rect x="17.4" y="23.4" width="2.3" height="9.4" rx="1.1" fill="#58aed6"/>
<rect x="27.4" y="19.4" width="2" height="7.4" rx="1" fill="#8cc8e6"/>
<rect x="22.6" y="27.2" width="2.2" height="1.8" rx="0.5"/>
<circle cx="22" cy="16.6" r="0.9"/><circle cx="10.3" cy="28.2" r="0.9"/><circle cx="28.4" cy="28.3" r="0.8"/><circle cx="28.4" cy="30.2" r="0.8"/>
<rect x="7.9" y="31.1" width="5.8" height="6" rx="0.4"/>
<circle cx="28.4" cy="34.8" r="2.3"/>
</g></svg>
<svg class="b" style="left:494.6px;top:466.9px;" width="19.2" height="20" viewBox="0 0 38 41"><defs><clipPath id="cc2"><rect x="0" y="0" width="38" height="41"/></clipPath><filter id="cc2f" x="-5%" y="-5%" width="110%" height="110%"><feGaussianBlur stdDeviation="0.7"/></filter></defs>
<g clip-path="url(#cc2)"><g filter="url(#cc2f)">
<rect x="-2" y="-2" width="42" height="45" fill="#d2cbb9"/>
<rect x="-2" y="-2" width="42" height="10.5" fill="#a9a49b"/><rect x="0.6" y="0" width="1.3" height="8.5" fill="#98938a"/><rect x="3.8" y="0" width="1.3" height="8.5" fill="#98938a"/><rect x="7.0" y="0" width="1.3" height="8.5" fill="#98938a"/><rect x="10.2" y="0" width="1.3" height="8.5" fill="#98938a"/><rect x="13.4" y="0" width="1.3" height="8.5" fill="#98938a"/><rect x="16.6" y="0" width="1.3" height="8.5" fill="#98938a"/><rect x="19.8" y="0" width="1.3" height="8.5" fill="#98938a"/><rect x="23.0" y="0" width="1.3" height="8.5" fill="#98938a"/><rect x="26.2" y="0" width="1.3" height="8.5" fill="#98938a"/><rect x="29.4" y="0" width="1.3" height="8.5" fill="#98938a"/><rect x="32.6" y="0" width="1.3" height="8.5" fill="#98938a"/><rect x="35.8" y="0" width="1.3" height="8.5" fill="#98938a"/>
<path d="M22 8.5 L40 8.5 L40 43 L30 43 Z" fill="#c9c2b2"/>
<path d="M-2 8.5 L16 8.5 L6 22 L-2 24 Z" fill="#dcd6c7"/>
<rect x="24.3" y="4" width="8.4" height="4" rx="1.2" fill="#37332f"/><rect x="27.6" y="4.4" width="2.6" height="3.4" fill="#f4f2ee"/>
<path d="M28.5 8 L29.5 14" stroke="#8c877d" stroke-width="0.7"/>
<ellipse cx="6.4" cy="12.2" rx="3.5" ry="4.3" fill="#4c78c6" transform="rotate(-25 6.4 12.2)"/>
<ellipse cx="5.6" cy="10.8" rx="1.6" ry="1.8" fill="#7ea2e0"/>
<ellipse cx="18.8" cy="11" rx="2.8" ry="4.2" fill="#4f7bca" transform="rotate(12 18.8 11)"/>
<ellipse cx="19.4" cy="9.4" rx="1.3" ry="1.6" fill="#86a8e4"/>
<path d="M11.5 15 L17 13.5 L16 18 L12 19 Z" fill="#d9cd2e"/>
<rect x="4.8" y="19.2" width="7" height="4.8" rx="0.8" fill="#e6d706"/>
<path d="M22 16 L27.5 19.5 L28 24 L24 22 Z" fill="#b7b84a"/>
<path d="M12.2 16.5 L20.5 15.6 L27.8 22 L32.2 29.4 L32 35 L28.6 38.2 L20 37.6 L16 32.2 L12.6 23.5 Z" fill="#16181b"/>
<path d="M17 19.5 L22.5 18.5 L25.5 22.8 L18.5 24.2 Z" fill="#0c0d10"/>
<path d="M18.8 25 L26.4 23.8 L29.2 28.6 L21.6 30.2 Z" fill="#7f9160"/>
<path d="M18.2 31.5 L31 29.6 L31.4 33.8 L20.8 35.4 Z" fill="#23262b"/>
<rect x="18.3" y="32.2" width="2.6" height="1.7" fill="#c23b3b" transform="rotate(-8 19.6 33)"/>
<rect x="30.2" y="31.2" width="1.8" height="1.7" fill="#c23b3b"/>
<rect x="23.8" y="32.6" width="4.2" height="1.6" fill="#d8d8d8" transform="rotate(-6 26 33.4)"/>
<rect x="21.8" y="37.3" width="7.2" height="2.7" fill="#dccb12"/>
<path d="M3.2 26.4 L8.6 25.6 L8.6 31 L12 31.4 L12.2 36.6 L9 38 L3.4 35.4 Z" fill="#3f9fd2"/>
<path d="M3.2 26.4 L8.6 25.6 L8.6 27.8 L3.6 29 Z" fill="#6fc0e6"/>
<path d="M7.4 32 L12 31.4 L12.1 33 L8.2 34 Z" fill="#74c4e8"/>
</g></g></svg>
<svg class="b" style="left:495px;top:496.2px;" width="19.4" height="18" viewBox="0 0 19.4 18"><use href="#folder" width="19.4" height="18"/></svg>
<svg class="b" style="left:495px;top:524.7px;" width="19.4" height="18" viewBox="0 0 19.4 18"><use href="#folder" width="19.4" height="18"/></svg>
<svg class="b" style="left:498.1px;top:553px;" width="13.5" height="18.4" viewBox="0 0 25 35.6"><g stroke="#2a7cab" stroke-width="0.75" stroke-linejoin="round">
<path d="M0.4 5.3 L8.2 0.4 L16.3 5.3 L8.2 10.3 Z" fill="#bfe0f1"/>
<path d="M0.4 5.3 L8.2 10.3 V20 L0.4 15.4 Z" fill="#86c5e3"/>
<path d="M16.3 5.3 L8.2 10.3 V20 L16.3 15.2 Z" fill="#3a97c9"/>
<path d="M0.4 15.4 L8.2 20 V30.2 L0.4 25.5 Z" fill="#86c5e3"/>
<path d="M8.3 20.3 L16.5 15.6 L24.6 20.4 L16.5 25.6 Z" fill="#bfe0f1"/>
<path d="M8.3 20.3 L16.5 25.6 V35.2 L8.3 30.2 Z" fill="#86c5e3"/>
<path d="M24.6 20.4 L16.5 25.6 V35.2 L24.6 30.3 Z" fill="#3a97c9"/>
</g>
<path d="M0.4 5.3 L8.2 0.4 L16.3 5.3 V15.4 L16.5 15.6 L24.6 20.4 V30.3 L16.5 35.2 L0.4 25.5 Z" fill="none" stroke="#4a6c80" stroke-width="0.8" stroke-linejoin="round"/></svg>
<div class="b" style="left:784.5px;top:577.5px;width:412.5px;height:14px;background:#f1f1f1;"></div>
<svg class="b" style="left:789.5px;top:581.5px;" width="4" height="6" viewBox="0 0 4 6"><path d="M3.5 0 L0 3 L3.5 6 Z" fill="#a3a3a3"/></svg>
<div class="b" style="left:798px;top:579.5px;width:399px;height:10.5px;background:#bcbcbc;"></div>
<div class="b" style="left:1485px;top:108px;width:45px;height:724px;background:#efefef;"></div>
<span class="t" style="left:1487.40px;top:146.50px;font-size:8.8px;color:#595959;transform:scaleX(0.9315);">Information</span>
<svg class="b" style="left:1500.25px;top:128.8px;" width="15" height="15" viewBox="0 0 15 15"><g fill="none" stroke="#505050" stroke-width="0.95" stroke-linecap="round" stroke-linejoin="round"><circle cx="7.5" cy="7.5" r="6.3"/><path d="M7.5 6.4 V11 M7.5 4 V4.5"/></g></svg>
<span class="t" style="left:1495.15px;top:187.00px;font-size:8.8px;color:#595959;transform:scaleX(0.8280);">Discuss</span>
<svg class="b" style="left:1500.25px;top:170.0px;" width="15" height="15" viewBox="0 0 15 15"><g fill="none" stroke="#505050" stroke-width="0.95" stroke-linecap="round" stroke-linejoin="round"><path d="M2.6 1.2 H7.9 Q9.4 1.2 9.4 2.7 V4.6 M5.6 8.9 H4.4 L2.7 10.4 V8.9 H2.6 Q1.1 8.9 1.1 7.4 V2.7 Q1.1 1.2 2.6 1.2"/><path d="M7.7 5.4 H13.2 Q14.7 5.4 14.7 6.9 V11.6 Q14.7 13.1 13.2 13.1 H13 V14.8 L11.2 13.1 H7.7 Q6.2 13.1 6.2 11.6 V6.9 Q6.2 5.4 7.7 5.4 Z"/></g></svg>
<span class="t" style="left:1497.90px;top:227.50px;font-size:8.8px;color:#595959;transform:scaleX(0.9289);">Open</span>
<svg class="b" style="left:1500.25px;top:210.7px;" width="15" height="15" viewBox="0 0 15 15"><g fill="none" stroke="#505050" stroke-width="0.95" stroke-linecap="round" stroke-linejoin="round"><path d="M6.6 4.2 H1.5 V13.9 H11.1 V9.2"/><path d="M6.3 11.2 V9.4 Q6.3 4.3 12.6 4.3 H14.2 M11.6 1.4 L14.5 4.3 L11.6 7.2"/></g></svg>
<svg class="b" style="left:1489px;top:215.2px;" width="3.5" height="6" viewBox="0 0 3.5 6"><path d="M3.2 0 L0 3 L3.2 6 Z" fill="#d2d2d2"/></svg>
<span class="t" style="left:1501.65px;top:268.50px;font-size:8.8px;color:#a6a6a6;transform:scaleX(0.9122);">Cut</span>
<svg class="b" style="left:1500.25px;top:251.39999999999998px;" width="15" height="15" viewBox="0 0 15 15"><g fill="none" stroke="#acacac" stroke-width="0.95" stroke-linecap="round" stroke-linejoin="round"><circle cx="3.4" cy="5.5" r="1.9"/><circle cx="6" cy="11.6" r="1.9"/><path d="M5.2 6.2 L12.3 8.4 Q14.2 6.9 12.6 6 L5.3 5.9"/><path d="M6.6 9.8 L9.2 1.6 Q11.4 1.2 11 3.2 L7.4 10"/></g></svg>
<span class="t" style="left:1498.90px;top:309.00px;font-size:8.8px;color:#595959;transform:scaleX(0.8760);">Copy</span>
<svg class="b" style="left:1500.25px;top:292.5px;" width="15" height="15" viewBox="0 0 15 15"><g fill="none" stroke="#505050" stroke-width="0.95" stroke-linecap="round" stroke-linejoin="round"><path d="M5.6 11.4 H1.5 V0.9 H9 V2.9"/><path d="M6.3 3.7 H11.4 L14.6 6.9 V14.2 H6.3 Z"/><path d="M11.4 3.7 V6.9 H14.6"/></g></svg>
<span class="t" style="left:1497.65px;top:350.00px;font-size:8.8px;color:#a6a6a6;transform:scaleX(0.9111);">Paste</span>
<svg class="b" style="left:1500.25px;top:332.9px;" width="15" height="15" viewBox="0 0 15 15"><g fill="none" stroke="#acacac" stroke-width="0.95" stroke-linecap="round" stroke-linejoin="round"><path d="M6.4 14.1 H1.5 V2.8 H4.4 M9.4 2.8 H12 V4.6"/><path d="M4.4 3.8 L5.2 1.8 H5.9 Q6.9 -0.2 7.9 1.8 H8.6 L9.4 3.8 Z"/><path d="M7.3 5.4 H11.6 L14.6 8.4 V14.1 H7.3 Z M11.6 5.4 V8.4 H14.6"/></g></svg>
<span class="t" style="left:1500.15px;top:390.50px;font-size:8.8px;color:#595959;transform:scaleX(0.8802);">New</span>
<svg class="b" style="left:1500.25px;top:373.1px;" width="15" height="15" viewBox="0 0 15 15"><g fill="none" stroke="#6e6e6e" stroke-width="0.95" stroke-linecap="round" stroke-linejoin="round"><path d="M7.5 1 V5.3 M7.5 9.9 V14.2 M1 7.6 H5.2 M9.8 7.6 H14 M2.9 3 L5.8 5.9 M9.3 9.4 L12.1 12.2 M12.1 3 L9.3 5.9 M5.8 9.4 L2.9 12.2" stroke-width="0.85"/></g></svg>
<svg class="b" style="left:1489px;top:377.6px;" width="3.5" height="6" viewBox="0 0 3.5 6"><path d="M3.2 0 L0 3 L3.2 6 Z" fill="#d2d2d2"/></svg>
<span class="t" style="left:1501.15px;top:431.00px;font-size:8.8px;color:#595959;transform:scaleX(0.8898);">Edit</span>
<svg class="b" style="left:1500.25px;top:414.2px;" width="15" height="15" viewBox="0 0 15 15"><g fill="none" stroke="#505050" stroke-width="0.95" stroke-linecap="round" stroke-linejoin="round"><path d="M1.4 13.8 L2.4 10.6 L11.2 1.8 Q12 1 12.8 1.8 L13.5 2.5 Q14.3 3.3 13.5 4.1 L4.7 12.9 Z M10 3 L12.3 5.3 M2.4 10.6 L4.7 12.9"/></g></svg>
<svg class="b" style="left:1489px;top:418.7px;" width="3.5" height="6" viewBox="0 0 3.5 6"><path d="M3.2 0 L0 3 L3.2 6 Z" fill="#d2d2d2"/></svg>
<span class="t" style="left:1493.65px;top:472.00px;font-size:8.8px;color:#595959;transform:scaleX(0.8963);">Manage</span>
<svg class="b" style="left:1500.25px;top:455.7px;" width="15" height="15" viewBox="0 0 15 15"><g fill="none" stroke="#505050" stroke-width="0.95" stroke-linecap="round" stroke-linejoin="round"><path d="M1.6 12.6 L8.6 5.6 M3.2 14.2 L10.2 7.2 M1.6 12.6 Q0.8 13.4 1.6 14.2 Q2.4 15 3.2 14.2" stroke-width="1.05"/><path d="M8.6 5.6 Q8 2.6 11 1.2 L10.4 3.4 L12 5 L14.2 4.4 Q13 7.6 10.2 7.2" stroke-width="1.05"/><path d="M13.6 12.6 L7.4 6.4 M12 14.2 L5.8 8 M13.6 12.6 Q14.4 13.4 13.6 14.2 Q12.8 15 12 14.2" stroke-width="1.05"/><path d="M7.4 6.4 L4.6 3.6 L5.2 3 L2.8 0.8 L0.9 2.7 L3.1 5.1 L3.7 4.5 L5.8 8" stroke-width="1.05"/></g></svg>
<svg class="b" style="left:1489px;top:460.2px;" width="3.5" height="6" viewBox="0 0 3.5 6"><path d="M3.2 0 L0 3 L3.2 6 Z" fill="#d2d2d2"/></svg>
<span class="t" style="left:1497.90px;top:513.00px;font-size:8.8px;color:#595959;transform:scaleX(0.8516);">Share</span>
<svg class="b" style="left:1500.25px;top:496.0px;" width="15" height="15" viewBox="0 0 15 15"><g fill="none" stroke="#505050" stroke-width="0.95" stroke-linecap="round" stroke-linejoin="round"><circle cx="3.1" cy="7.6" r="1.9"/><circle cx="11.9" cy="2.9" r="1.9"/><circle cx="11.9" cy="12.3" r="1.9"/><path d="M4.8 6.7 L10.2 3.8 M4.8 8.5 L10.2 11.4"/></g></svg>
<svg class="b" style="left:1489px;top:500.5px;" width="3.5" height="6" viewBox="0 0 3.5 6"><path d="M3.2 0 L0 3 L3.2 6 Z" fill="#d2d2d2"/></svg>
<span class="t" style="left:1499.90px;top:553.50px;font-size:8.8px;color:#595959;transform:scaleX(0.8456);">View</span>
<svg class="b" style="left:1500.25px;top:536.7px;" width="15" height="15" viewBox="0 0 15 15"><g fill="none" stroke="#505050" stroke-width="0.95" stroke-linecap="round" stroke-linejoin="round"><path d="M0.6 7.5 Q7.5 -0.3 14.4 7.5 Q7.5 15.3 0.6 7.5 Z"/><circle cx="7.5" cy="7.5" r="2.9"/><circle cx="7.5" cy="7.5" r="1" stroke-width="0.7"/></g></svg>
<svg class="b" style="left:1489px;top:541.2px;" width="3.5" height="6" viewBox="0 0 3.5 6"><path d="M3.2 0 L0 3 L3.2 6 Z" fill="#d2d2d2"/></svg>
<div class="b" style="left:1197.5px;top:109px;width:287.5px;height:723px;background:#fff;box-shadow:-4px 0 10px rgba(0,0,0,0.32), -1px 0 2px rgba(0,0,0,0.2);clip-path:inset(0 0 0 -30px);"></div>
<div class="b" style="left:1197.5px;top:109px;width:287.5px;height:41.5px;background:#03588d;"></div>
<span class="t" style="left:1210.00px;top:122.61px;font-size:15.5px;color:#fff;font-weight:700;transform:scaleX(0.8473);">Create Physical Test</span>
<svg class="b" style="left:1380.5px;top:125.5px;" width="14" height="10" viewBox="0 0 14 10"><g fill="none" stroke="#fff" stroke-width="0.9" stroke-linecap="round" stroke-linejoin="round" stroke="#e3f0fa"><path d="M0.4 4.9 H4"/><path d="M4 0.8 Q4.3 2.7 5.9 2.7 H10.9 Q11.5 2.1 12.6 2 V8.1 Q11.5 8 10.9 7.4 H5.9 Q4.3 7.4 4 9.4 Z"/></g></svg>
<span class="t" style="left:1396.60px;top:121.01px;font-size:9px;color:#eef6fc;transform:scaleX(0.7914);">Pin</span>
<span class="t" style="left:1396.60px;top:132.11px;font-size:9px;color:#eef6fc;transform:scaleX(0.7989);">Panel</span>
<svg class="b" style="left:1436px;top:125.3px;" width="9.8" height="10.8" viewBox="0 0 9.8 10.8"><g fill="none" stroke="#fff" stroke-width="0.9" stroke-linecap="round" stroke-linejoin="round" stroke="#e3f0fa"><path d="M0.4 0.4 L9.4 10.4 M9.4 0.4 L0.4 10.4"/></g></svg>
<span class="t" style="left:1450.10px;top:127.31px;font-size:9px;color:#eef6fc;transform:scaleX(0.8429);">Close</span>
<svg class="b" style="left:1216.7px;top:172px;" width="14" height="14" viewBox="0 0 14 14"><g fill="none" stroke="#5a5a5a" stroke-width="0.9" stroke-linecap="round" stroke-linejoin="round" stroke="#858585"><path d="M13.3 6 A6.4 6.4 0 1 0 12.4 10.6"/><path d="M13.4 7 H4.6 M7.4 4.4 L4.6 7.2 L7.4 10"/></g></svg>
<div class="b" style="left:1236.5px;top:165px;width:235.5px;height:31px;background:#efefef;"></div>
<span class="t" style="left:1249.50px;top:174.80px;font-size:11.5px;color:#2b2b2b;font-weight:700;transform:scaleX(0.8101);">PHYSICAL TEST RESULT</span>
<div class="b" style="left:1224px;top:216px;width:222px;height:10.5px;border:1px solid #9a9a9a;border-top:none;border-radius:0 0 2px 2px;border-bottom:1.5px solid #8fa9b8;background:#fff;"></div>
<div class="b" style="left:1200px;top:200px;width:258px;height:22.5px;background:#fff;"></div>
<div class="b" style="left:1459px;top:224px;width:13px;height:556.5px;background:#f1f1f1;"></div>
<svg class="b" style="left:1462px;top:229px;" width="6.5" height="4" viewBox="0 0 6.5 4"><path d="M0 4 L3.25 0 L6.5 4 Z" fill="#4d4d4d"/></svg>
<svg class="b" style="left:1462px;top:771px;" width="6.5" height="4" viewBox="0 0 6.5 4"><path d="M0 0 L3.25 4 L6.5 0 Z" fill="#8f8f8f"/></svg>
<div class="b" style="left:1460.6px;top:381px;width:9.5px;height:385px;background:#c1c1c1;"></div>
<span class="t" style="left:1224.00px;top:235.00px;font-size:11.5px;color:#464646;-webkit-text-stroke:0.3px #464646;transform:scaleX(0.8564);">Description:</span>
<div class="b" style="left:1224px;top:250.5px;width:222px;height:41.5px;border:1px solid #8e8e8e;border-radius:2px;background:#fff;"></div>
<svg class="b" style="left:1437px;top:283.0px;" width="8" height="8" viewBox="0 0 8 8"><path d="M7.5 0.5 L0.5 7.5 M7.5 4 L4 7.5" stroke="#7a7a7a" stroke-width="0.9" fill="none"/></svg>
<span class="t" style="left:1224.00px;top:300.50px;font-size:11.5px;color:#464646;-webkit-text-stroke:0.3px #464646;transform:scaleX(0.8139);">Test Type:</span>
<div class="b" style="left:1224px;top:315.5px;width:222px;height:41.5px;border:1px solid #8e8e8e;border-radius:2px;background:#fff;"></div>
<svg class="b" style="left:1437px;top:348.0px;" width="8" height="8" viewBox="0 0 8 8"><path d="M7.5 0.5 L0.5 7.5 M7.5 4 L4 7.5" stroke="#7a7a7a" stroke-width="0.9" fill="none"/></svg>
<span class="t" style="left:1224.00px;top:365.50px;font-size:11.5px;color:#464646;-webkit-text-stroke:0.3px #464646;transform:scaleX(0.8509);">Tool Name:</span>
<div class="b" style="left:1224px;top:381px;width:222px;height:41.5px;border:1px solid #8e8e8e;border-radius:2px;background:#fff;"></div>
<svg class="b" style="left:1437px;top:413.5px;" width="8" height="8" viewBox="0 0 8 8"><path d="M7.5 0.5 L0.5 7.5 M7.5 4 L4 7.5" stroke="#7a7a7a" stroke-width="0.9" fill="none"/></svg>
<div class="b" style="left:1211px;top:450.5px;width:247px;height:27px;background:#efefef;"></div>
<span class="t" style="left:1224.00px;top:459.00px;font-size:11.5px;color:#2b2b2b;font-weight:700;transform:scaleX(0.8486);">OWNING PROJECT</span>
<div class="b" style="left:1211px;top:513px;width:247px;height:27.7px;background:#efefef;"></div>
<span class="t" style="left:1224.00px;top:522.00px;font-size:11.5px;color:#2b2b2b;font-weight:700;transform:scaleX(0.7823);">PROJECTS</span>
<svg class="b" style="left:1216.5px;top:551.7px;" width="14" height="14" viewBox="0 0 14 14"><g fill="none" stroke="#5a5a5a" stroke-width="0.9" stroke-linecap="round" stroke-linejoin="round"><circle cx="7" cy="7" r="6.3"/><path d="M7 3.2 V10.8 M3.2 7 H10.8"/></g></svg>
<span class="t" style="left:1233.50px;top:549.51px;font-size:9px;color:#5a5a5a;transform:scaleX(0.8741);">Add</span>
<span class="t" style="left:1233.50px;top:560.01px;font-size:9px;color:#5a5a5a;transform:scaleX(0.8567);">Project</span>
<div class="b" style="left:1211px;top:574.8px;width:247px;height:2.4px;background:linear-gradient(to bottom,#cfcfcf,#bdbdbd 50%,#e6e6e6);"></div>
<div class="b" style="left:1211px;top:619px;width:247px;height:27px;background:#efefef;"></div>
<span class="t" style="left:1224.00px;top:626.91px;font-size:11.5px;color:#2b2b2b;font-weight:700;transform:scaleX(0.8244);">PHYSICAL TEST RESULT TEMPLATE</span>
<svg class="b" style="left:1216.5px;top:657.2px;" width="14" height="14" viewBox="0 0 14 14"><g fill="none" stroke="#5a5a5a" stroke-width="0.9" stroke-linecap="round" stroke-linejoin="round"><circle cx="7" cy="7" r="6.3"/><path d="M7 3.2 V10.8 M3.2 7 H10.8"/></g></svg>
<span class="t" style="left:1233.50px;top:655.01px;font-size:9px;color:#5a5a5a;transform:scaleX(0.8741);">Add</span>
<span class="t" style="left:1233.50px;top:665.51px;font-size:9px;color:#5a5a5a;transform:scaleX(0.8074);">Physica...</span>
<div class="b" style="left:1211px;top:680.2px;width:247px;height:2.4px;background:linear-gradient(to bottom,#cfcfcf,#bdbdbd 50%,#e6e6e6);"></div>
<svg class="b" style="left:1224px;top:702.5px;" width="38" height="41.5" viewBox="0 0 38 41"><defs><clipPath id="cc3"><rect x="0" y="0" width="38" height="41"/></clipPath><filter id="cc3f" x="-5%" y="-5%" width="110%" height="110%"><feGaussianBlur stdDeviation="0.7"/></filter></defs>
<g clip-path="url(#cc3)"><g filter="url(#cc3f)">
<rect x="-2" y="-2" width="42" height="45" fill="#d2cbb9"/>
<rect x="-2" y="-2" width="42" height="10.5" fill="#a9a49b"/><rect x="0.6" y="0" width="1.3" height="8.5" fill="#98938a"/><rect x="3.8" y="0" width="1.3" height="8.5" fill="#98938a"/><rect x="7.0" y="0" width="1.3" height="8.5" fill="#98938a"/><rect x="10.2" y="0" width="1.3" height="8.5" fill="#98938a"/><rect x="13.4" y="0" width="1.3" height="8.5" fill="#98938a"/><rect x="16.6" y="0" width="1.3" height="8.5" fill="#98938a"/><rect x="19.8" y="0" width="1.3" height="8.5" fill="#98938a"/><rect x="23.0" y="0" width="1.3" height="8.5" fill="#98938a"/><rect x="26.2" y="0" width="1.3" height="8.5" fill="#98938a"/><rect x="29.4" y="0" width="1.3" height="8.5" fill="#98938a"/><rect x="32.6" y="0" width="1.3" height="8.5" fill="#98938a"/><rect x="35.8" y="0" width="1.3" height="8.5" fill="#98938a"/>
<path d="M22 8.5 L40 8.5 L40 43 L30 43 Z" fill="#c9c2b2"/>
<path d="M-2 8.5 L16 8.5 L6 22 L-2 24 Z" fill="#dcd6c7"/>
<rect x="24.3" y="4" width="8.4" height="4" rx="1.2" fill="#37332f"/><rect x="27.6" y="4.4" width="2.6" height="3.4" fill="#f4f2ee"/>
<path d="M28.5 8 L29.5 14" stroke="#8c877d" stroke-width="0.7"/>
<ellipse cx="6.4" cy="12.2" rx="3.5" ry="4.3" fill="#4c78c6" transform="rotate(-25 6.4 12.2)"/>
<ellipse cx="5.6" cy="10.8" rx="1.6" ry="1.8" fill="#7ea2e0"/>
<ellipse cx="18.8" cy="11" rx="2.8" ry="4.2" fill="#4f7bca" transform="rotate(12 18.8 11)"/>
<ellipse cx="19.4" cy="9.4" rx="1.3" ry="1.6" fill="#86a8e4"/>
<path d="M11.5 15 L17 13.5 L16 18 L12 19 Z" fill="#d9cd2e"/>
<rect x="4.8" y="19.2" width="7" height="4.8" rx="0.8" fill="#e6d706"/>
<path d="M22 16 L27.5 19.5 L28 24 L24 22 Z" fill="#b7b84a"/>
<path d="M12.2 16.5 L20.5 15.6 L27.8 22 L32.2 29.4 L32 35 L28.6 38.2 L20 37.6 L16 32.2 L12.6 23.5 Z" fill="#16181b"/>
<path d="M17 19.5 L22.5 18.5 L25.5 22.8 L18.5 24.2 Z" fill="#0c0d10"/>
<path d="M18.8 25 L26.4 23.8 L29.2 28.6 L21.6 30.2 Z" fill="#7f9160"/>
<path d="M18.2 31.5 L31 29.6 L31.4 33.8 L20.8 35.4 Z" fill="#23262b"/>
<rect x="18.3" y="32.2" width="2.6" height="1.7" fill="#c23b3b" transform="rotate(-8 19.6 33)"/>
<rect x="30.2" y="31.2" width="1.8" height="1.7" fill="#c23b3b"/>
<rect x="23.8" y="32.6" width="4.2" height="1.6" fill="#d8d8d8" transform="rotate(-6 26 33.4)"/>
<rect x="21.8" y="37.3" width="7.2" height="2.7" fill="#dccb12"/>
<path d="M3.2 26.4 L8.6 25.6 L8.6 31 L12 31.4 L12.2 36.6 L9 38 L3.4 35.4 Z" fill="#3f9fd2"/>
<path d="M3.2 26.4 L8.6 25.6 L8.6 27.8 L3.6 29 Z" fill="#6fc0e6"/>
<path d="M7.4 32 L12 31.4 L12.1 33 L8.2 34 Z" fill="#74c4e8"/>
</g></g></svg>
<span class="t" style="left:1269.00px;top:704.01px;font-size:12.5px;color:#3c3c3c;font-weight:700;transform:scaleX(0.8894);">Project with default NVH Pro...</span>
<span class="t" style="left:1269.00px;top:719.50px;font-size:11.5px;color:#464646;transform:scaleX(0.7665);">TEST-TPL-100000</span>
<span class="t" style="left:1269.00px;top:732.00px;font-size:11.5px;color:#464646;-webkit-text-stroke:0.35px #464646;transform:scaleX(0.8032);">Revision:</span>
<span class="t" style="left:1312.50px;top:732.00px;font-size:11.5px;color:#464646;transform:scaleX(0.8473);">A</span>
<div class="b" style="left:1224px;top:788px;width:235px;height:22.5px;background:#004670;border:1px solid #003a5e;border-radius:2px;box-shadow:0 1px 3px rgba(0,0,0,0.4);"></div>
<span class="t" style="left:1327.50px;top:795.00px;font-size:11.5px;color:#fff;font-weight:700;transform:scaleX(0.7958);">Create</span>
<svg class="b" style="left:1399.5px;top:794.5px;" width="15" height="22" viewBox="0 0 15 22"><path d="M4.1 2.2 Q4.1 1 5.3 1 Q6.5 1 6.5 2.2 V6.4 Q7.6 5.3 8.7 6.4 Q9.9 5.4 11 6.6 Q12.5 5.9 13.7 7.4 V14.5 Q13.7 20.7 8.6 20.7 Q5.6 20.7 3.6 17.6 L0.7 13.2 Q0.2 12.2 1.2 11.9 Q2 11.7 2.8 12.5 L4.1 13.8 Z" fill="#fff" stroke="#1c2836" stroke-width="0.9" stroke-linejoin="round"/><path d="M6.5 6.4 V9.4 M8.7 6.6 V9.6 M11 6.8 V9.8" stroke="#5a5a5a" stroke-width="0.7" fill="none"/></svg>
<div class="b" style="left:1197.5px;top:830.5px;width:287.5px;height:1.5px;background:#e6e6e6;"></div>
</div>
</body></html>
